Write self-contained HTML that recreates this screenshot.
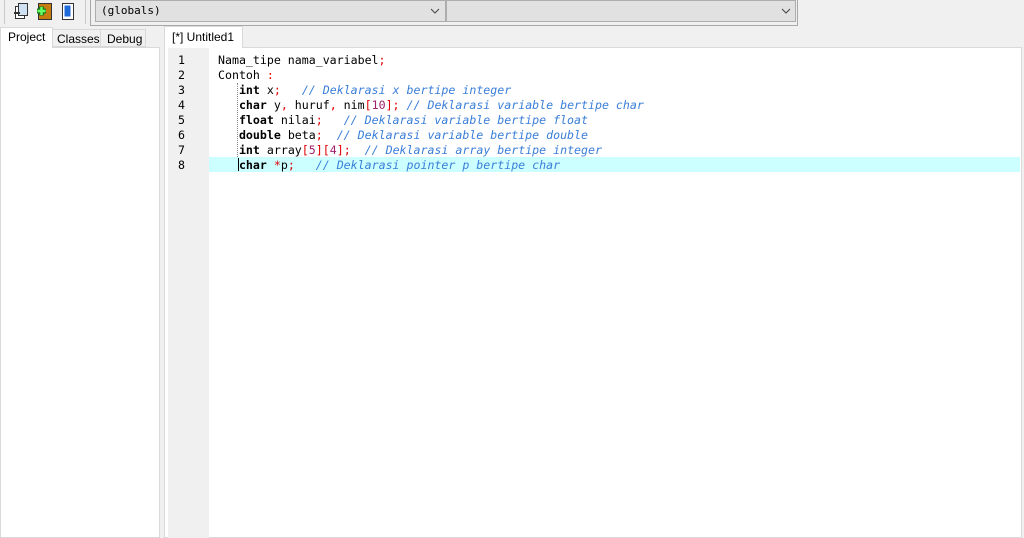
<!DOCTYPE html>
<html><head><meta charset="utf-8"><style>
*{margin:0;padding:0;box-sizing:border-box}
body{width:1024px;height:538px;background:#f0f0f0;position:relative;overflow:hidden;font-family:"Liberation Sans",sans-serif;font-size:12px;color:#000}
.a{position:absolute}
.code{font-family:"DejaVu Sans Mono","Liberation Mono",monospace;font-size:11.6px;line-height:15px;white-space:pre}
.k{font-weight:bold}
.r{color:#e00000}
.m{color:#a0206a}
.c{color:#3a7ed8;font-style:italic}
</style></head><body>
<div class="a" style="left:4px;top:0;width:1px;height:24px;background:#c8c8c8"></div>
<svg class="a" style="left:12px;top:2px" width="70" height="20">
<rect x="3.5" y="4.5" width="9" height="12" fill="#fff" stroke="#333"/><rect x="6.5" y="1.5" width="9" height="12" fill="#cfe0f0" stroke="#333"/><rect x="2" y="10" width="6" height="2" fill="#333"/>
<rect x="26.5" y="1.5" width="13" height="16" fill="#c87d10" stroke="#333"/><path d="M25 9h9M29.5 4.5v9" stroke="#1a7a1a" stroke-width="5"/><path d="M25.5 9h8M29.5 5v8" stroke="#6f6" stroke-width="2.5"/>
<rect x="50.5" y="1.5" width="11" height="16" fill="#fff" stroke="#333"/><rect x="52.5" y="3.5" width="6" height="11" fill="#1e6ad8"/>
</svg>
<div class="a" style="left:85px;top:0;width:1px;height:24px;background:#c8c8c8"></div>
<div class="a" style="left:90px;top:-2px;width:708px;height:28px;border:1px solid #a8a8a8;background:#f0f0f0"></div>
<div class="a" style="left:95px;top:0;width:351px;height:22px;background:#e1e1e1;border:1px solid #adadad"></div>
<div class="a code" style="left:101px;top:4px;font-size:11px;line-height:14px">(globals)</div>
<div class="a" style="left:446px;top:0;width:350px;height:22px;background:#e1e1e1;border:1px solid #adadad"></div>
<svg class="a" style="left:430px;top:7px" width="10" height="8"><path d="M1 2l4 4 4-4" fill="none" stroke="#444"/></svg>
<svg class="a" style="left:781px;top:7px" width="10" height="8"><path d="M1 2l4 4 4-4" fill="none" stroke="#444"/></svg>
<div class="a" style="left:0;top:47px;width:160px;height:491px;background:#fff;border:1px solid #d9d9d9"></div>
<div class="a" style="left:0;top:27px;width:53px;height:21px;background:#fff;border:1px solid #d9d9d9;border-bottom:none"></div>
<div class="a" style="left:8px;top:30px">Project</div>
<div class="a" style="left:53px;top:29px;width:48px;height:18px;background:#f0f0f0;border:1px solid #d9d9d9;border-left:none"></div>
<div class="a" style="left:57px;top:32px">Classes</div>
<div class="a" style="left:101px;top:29px;width:45px;height:18px;background:#f0f0f0;border:1px solid #d9d9d9;border-left:none"></div>
<div class="a" style="left:107px;top:32px">Debug</div>
<div class="a" style="left:164px;top:47px;width:858px;height:491px;background:#fff;border:1px solid #d9d9d9"></div>
<div class="a" style="left:164px;top:26px;width:79px;height:22px;background:#fff;border:1px solid #d9d9d9;border-bottom:none"></div>
<div class="a" style="left:172px;top:30px">[*] Untitled1</div>
<div class="a" style="left:168px;top:48px;width:41px;height:490px;background:#f0f0f0"></div>
<div class="a" style="left:209px;top:157px;width:811px;height:15px;background:#ccffff"></div>
<div class="a code" style="left:178px;top:53px">1
2
3
4
5
6
7
8</div>
<div class="a" style="left:237px;top:83px;width:0;height:74px;border-left:1px dotted #888"></div>
<div class="a" style="left:238px;top:158px;width:1px;height:13px;background:#000"></div>
<div class="a code" style="left:218px;top:53px">Nama_tipe nama_variabel<span class="r">;</span>
Contoh <span class="r">:</span>
   <span class="k">int</span> x<span class="r">;</span>   <span class="c">// Deklarasi x bertipe integer</span>
   <span class="k">char</span> y<span class="r">,</span> huruf<span class="r">,</span> nim<span class="r">[</span><span class="m">10</span><span class="r">];</span> <span class="c">// Deklarasi variable bertipe char</span>
   <span class="k">float</span> nilai<span class="r">;</span>   <span class="c">// Deklarasi variable bertipe float</span>
   <span class="k">double</span> beta<span class="r">;</span>  <span class="c">// Deklarasi variable bertipe double</span>
   <span class="k">int</span> array<span class="r">[</span><span class="m">5</span><span class="r">][</span><span class="m">4</span><span class="r">];</span>  <span class="c">// Deklarasi array bertipe integer</span>
   <span class="k">char</span> <span class="r">*</span>p<span class="r">;</span>   <span class="c">// Deklarasi pointer p bertipe char</span></div>
</body></html>
